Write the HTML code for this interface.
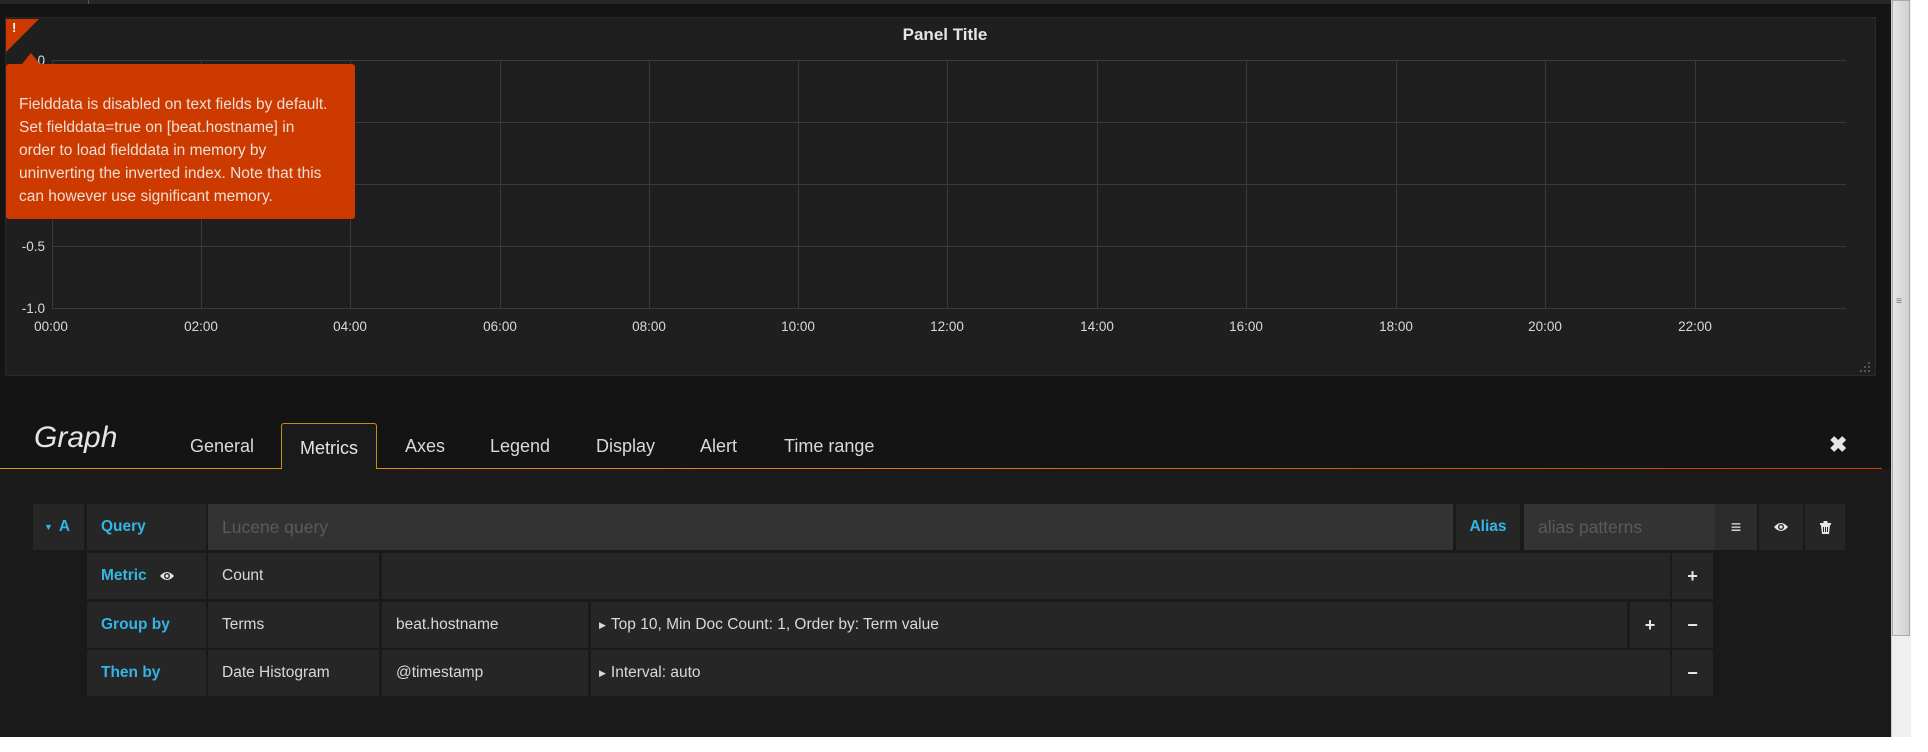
<!DOCTYPE html>
<html><head><meta charset="utf-8"><style>
*{margin:0;padding:0;box-sizing:border-box}
body{width:1928px;height:752px;background:#fff;position:relative;overflow:hidden;font-family:"Liberation Sans",Arial,sans-serif;color:#d8d9da}
.a{position:absolute}
.cell{position:absolute;background:#262626;font-size:15.5px;display:flex;align-items:center;padding-left:14px}
.blue{color:#33b5e5;font-weight:bold}
.btn{position:absolute;background:#262626;display:flex;align-items:center;justify-content:center;color:#e5e5e5;font-weight:bold;font-size:18px}
.tab{position:absolute;top:436px;font-size:18px;color:#d8d9da}
</style></head><body>
<div class="a" style="left:0;top:0;width:1891px;height:737px;background:#141414"></div>
<div class="a" style="left:0;top:0;width:1891px;height:4px;background:#262626"></div>
<div class="a" style="left:88px;top:0;width:1px;height:4px;background:#555"></div>
<div class="a" style="left:5px;top:17px;width:1871px;height:359px;background:#1f1f20;border:1px solid #2a2a2a"></div>
<div class="a" style="left:0;top:25px;width:1890px;text-align:center;font-size:17px;font-weight:bold;color:#e5e5e5">Panel Title</div>
<svg class="a" style="left:0;top:0" width="1890" height="400">
<g stroke="#3a3a3a" stroke-width="1">
<line x1="52" y1="60.5" x2="1846" y2="60.5"/>
<line x1="52" y1="122.5" x2="1846" y2="122.5"/>
<line x1="52" y1="184.5" x2="1846" y2="184.5"/>
<line x1="52" y1="246.5" x2="1846" y2="246.5"/>
<line x1="52" y1="308.5" x2="1846" y2="308.5"/>
<line x1="52.5" y1="60" x2="52.5" y2="309"/><line x1="201.5" y1="60" x2="201.5" y2="309"/><line x1="350.5" y1="60" x2="350.5" y2="309"/><line x1="500.5" y1="60" x2="500.5" y2="309"/><line x1="649.5" y1="60" x2="649.5" y2="309"/><line x1="798.5" y1="60" x2="798.5" y2="309"/><line x1="947.5" y1="60" x2="947.5" y2="309"/><line x1="1097.5" y1="60" x2="1097.5" y2="309"/><line x1="1246.5" y1="60" x2="1246.5" y2="309"/><line x1="1396.5" y1="60" x2="1396.5" y2="309"/><line x1="1545.5" y1="60" x2="1545.5" y2="309"/><line x1="1695.5" y1="60" x2="1695.5" y2="309"/>
</g>
<g font-family="Liberation Sans,Arial,sans-serif" font-size="13.5" fill="#d8d9da" text-anchor="middle">
<text x="51" y="331">00:00</text><text x="201" y="331">02:00</text><text x="350" y="331">04:00</text><text x="500" y="331">06:00</text><text x="649" y="331">08:00</text><text x="798" y="331">10:00</text><text x="947" y="331">12:00</text><text x="1097" y="331">14:00</text><text x="1246" y="331">16:00</text><text x="1396" y="331">18:00</text><text x="1545" y="331">20:00</text><text x="1695" y="331">22:00</text>
</g>
<g font-family="Liberation Sans,Arial,sans-serif" font-size="13.5" fill="#d8d9da" text-anchor="end">
<text x="45" y="65">1.0</text><text x="45" y="251">-0.5</text><text x="45" y="313">-1.0</text>
</g>
<polygon points="6,19 39,19 6,52" fill="#cc3a00"/>
<text x="12" y="32" font-family="Liberation Sans,Arial,sans-serif" font-size="13" font-weight="bold" fill="#fff">!</text>
<polygon points="31,53 22,64 40,64" fill="#cc3a00"/>
<g fill="#555"><rect x="1868" y="362" width="2" height="2"/><rect x="1864" y="366" width="2" height="2"/><rect x="1868" y="366" width="2" height="2"/><rect x="1860" y="370" width="2" height="2"/><rect x="1864" y="370" width="2" height="2"/><rect x="1868" y="370" width="2" height="2"/></g>
</svg>
<div class="a" style="left:6px;top:64px;width:349px;height:155px;background:#cc3a00;border-radius:3px;padding:29px 0 0 13px;font-size:15.5px;line-height:23px;color:#f0ddd3;white-space:nowrap">Fielddata is disabled on text fields by default.<br>Set fielddata=true on [beat.hostname] in<br>order to load fielddata in memory by<br>uninverting the inverted index. Note that this<br>can however use significant memory.</div>

<div class="a" style="left:0;top:469px;width:1891px;height:268px;background:#1a1a1a"></div>
<div class="a" style="left:34px;top:421px;font-size:30px;font-style:italic;color:#e5e5e5">Graph</div>
<div class="a" style="left:0;top:468px;width:1882px;height:1px;background:linear-gradient(90deg,#d89a10,#eb7b18 40%,#cc3a00)"></div>
<div class="a" style="left:281px;top:423px;width:96px;height:46px;background:#1a1a1a;border:1px solid #c98a1a;border-bottom:none;border-radius:3px 3px 0 0"></div>
<div class="tab" style="left:190px">General</div>
<div class="tab" style="left:300px;top:438px;color:#e5e5e5">Metrics</div>
<div class="tab" style="left:405px">Axes</div>
<div class="tab" style="left:490px">Legend</div>
<div class="tab" style="left:596px">Display</div>
<div class="tab" style="left:700px">Alert</div>
<div class="tab" style="left:784px">Time range</div>
<div class="a" style="left:1829px;top:432px;font-size:22px;font-weight:bold;color:#e5e5e5">✖</div>

<div class="cell blue" style="left:33px;top:504px;width:51px;height:46px;padding-left:11px;font-size:15.5px"><span style="font-size:9px;margin-right:6px">▼</span>A</div>
<div class="cell blue" style="left:87px;top:504px;width:119px;height:46px">Query</div>
<div class="cell" style="left:208px;top:504px;width:1245px;height:46px;background:#333;color:#5a5a5a;font-size:17.5px">Lucene query</div>
<div class="cell blue" style="left:1456px;top:504px;width:64px;height:46px;justify-content:center;padding:0">Alias</div>
<div class="cell" style="left:1524px;top:504px;width:191px;height:46px;background:#333;color:#5a5a5a;font-size:17.5px">alias patterns</div>
<div class="btn" style="left:1715px;top:504px;width:42px;height:46px;background:#2c2c2c">≡</div>
<div class="btn" style="left:1759px;top:504px;width:44px;height:46px"><svg width="16" height="12" viewBox="0 0 16 12"><path d="M1 6Q8-2 15 6Q8 14 1 6Z" fill="#e5e5e5"/><circle cx="8" cy="6" r="3" fill="#262626"/><circle cx="8" cy="6" r="1.6" fill="#e5e5e5"/></svg></div>
<div class="btn" style="left:1805px;top:504px;width:40px;height:46px"><svg width="11" height="13" viewBox="0 0 11 13"><rect x="0" y="2" width="11" height="2" fill="#e5e5e5"/><rect x="3.5" y="0" width="4" height="2" fill="#e5e5e5"/><path d="M1 4h9l-1 9H2z" fill="#e5e5e5"/><g fill="#262626"><rect x="3" y="6" width="1" height="5"/><rect x="5" y="6" width="1" height="5"/><rect x="7" y="6" width="1" height="5"/></g></svg></div>

<div class="cell blue" style="left:87px;top:553px;width:119px;height:46px">Metric <svg style="margin-left:12px" width="16" height="12" viewBox="0 0 16 12"><path d="M1 6Q8-2 15 6Q8 14 1 6Z" fill="#e5e5e5"/><circle cx="8" cy="6" r="3" fill="#262626"/><circle cx="8" cy="6" r="1.6" fill="#e5e5e5"/></svg></div>
<div class="cell" style="left:208px;top:553px;width:171px;height:46px">Count</div>
<div class="cell" style="left:382px;top:553px;width:1288px;height:46px"></div>
<div class="btn" style="left:1672px;top:553px;width:41px;height:46px">+</div>

<div class="cell blue" style="left:87px;top:602px;width:119px;height:46px">Group by</div>
<div class="cell" style="left:208px;top:602px;width:171px;height:46px">Terms</div>
<div class="cell" style="left:382px;top:602px;width:206px;height:46px">beat.hostname</div>
<div class="cell" style="left:591px;top:602px;width:1036px;height:46px;padding-left:8px"><span style="font-size:9px;margin-right:5px">▶</span>Top 10, Min Doc Count: 1, Order by: Term value</div>
<div class="btn" style="left:1630px;top:602px;width:40px;height:46px">+</div>
<div class="btn" style="left:1672px;top:602px;width:41px;height:46px">−</div>

<div class="cell blue" style="left:87px;top:650px;width:119px;height:46px">Then by</div>
<div class="cell" style="left:208px;top:650px;width:171px;height:46px">Date Histogram</div>
<div class="cell" style="left:382px;top:650px;width:206px;height:46px">@timestamp</div>
<div class="cell" style="left:591px;top:650px;width:1079px;height:46px;padding-left:8px"><span style="font-size:9px;margin-right:5px">▶</span>Interval: auto</div>
<div class="btn" style="left:1672px;top:650px;width:41px;height:46px">−</div>

<div class="a" style="left:1891px;top:0;width:20px;height:737px;background:#efefef;border-left:1px solid #ccc"></div>
<div class="a" style="left:1892px;top:0;width:18px;height:636px;background:linear-gradient(90deg,#e6e6e6,#cfcfcf);border:1px solid #aaa"></div>
<div class="a" style="left:1896px;top:296px;font-size:10px;color:#777">≡</div>
</body></html>
